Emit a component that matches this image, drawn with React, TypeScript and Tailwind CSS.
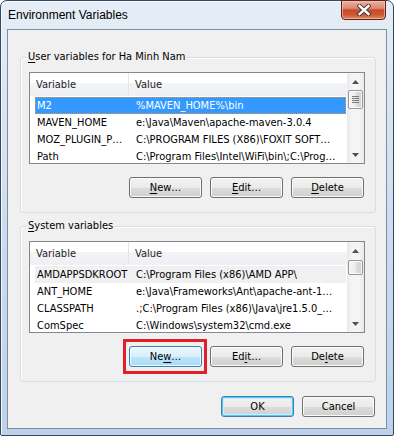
import React from "react";

type Row = { name: string; value: string; sel?: "focus" | "inactive" };

const userRows: Row[] = [
  { name: "M2", value: "%MAVEN_HOME%\\bin", sel: "focus" },
  { name: "MAVEN_HOME", value: "e:\\Java\\Maven\\apache-maven-3.0.4" },
  { name: "MOZ_PLUGIN_P…", value: "C:\\PROGRAM FILES (X86)\\FOXIT SOFT…" },
  { name: "Path", value: "C:\\Program Files\\Intel\\WiFi\\bin\\;C:\\Prog…" },
];

const sysRows: Row[] = [
  { name: "AMDAPPSDKROOT", value: "C:\\Program Files (x86)\\AMD APP\\", sel: "inactive" },
  { name: "ANT_HOME", value: "e:\\Java\\Frameworks\\Ant\\apache-ant-1…" },
  { name: "CLASSPATH", value: ".;C:\\Program Files (x86)\\Java\\jre1.5.0_…" },
  { name: "ComSpec", value: "C:\\Windows\\system32\\cmd.exe" },
];

function Btn({
  children,
  kind = "normal",
}: {
  children: React.ReactNode;
  kind?: "normal" | "hot" | "default";
}) {
  const base =
    "w-[73px] h-[21px] flex items-center justify-center rounded-[3px] border text-[11px] leading-none text-black";
  const cls =
    kind === "hot"
      ? "border-[#3c7fb1] bg-[linear-gradient(#eaf6fd_0%,#d9f0fc_50%,#bee6fd_50%,#a7d9f5_100%)] shadow-[inset_0_0_0_1px_#f4fbfe]"
      : kind === "default"
      ? "border-[#3c7fb1] bg-[linear-gradient(#f2f2f2_0%,#ebebeb_50%,#dddddd_50%,#cfcfcf_100%)] shadow-[inset_0_0_0_1px_#56c6f2,inset_0_0_0_2px_#c9eefc]"
      : "border-[#707070] bg-[linear-gradient(#f2f2f2_0%,#ebebeb_50%,#dddddd_50%,#cfcfcf_100%)] shadow-[inset_0_0_0_1px_#fbfbfb]";
  return <div className={`${base} ${cls}`}>{children}</div>;
}

function U({ children }: { children: React.ReactNode }) {
  return <span className="underline decoration-1 underline-offset-[2px]">{children}</span>;
}

function Arrow({ up }: { up?: boolean }) {
  return (
    <svg width="7" height="4" viewBox="0 0 7 4">
      {up ? (
        <polygon points="3.5,0 7,4 0,4" fill="#505050" />
      ) : (
        <polygon points="0,0 7,0 3.5,4" fill="#505050" />
      )}
    </svg>
  );
}

function VarList({
  rows,
  thumb,
  grip,
}: {
  rows: Row[];
  thumb: string;
  grip?: boolean;
}) {
  return (
    <div className="w-[336px] h-[92px] border border-[#828790] bg-white flex overflow-hidden">
      <div className="flex-1 flex flex-col min-w-0">
        <div className="h-[23px] flex shrink-0 bg-[linear-gradient(#ffffff_0%,#ffffff_45%,#f3f4f6_45%,#eef0f3_100%)] border-b border-[#eef0f3]">
          <div className="w-[99px] pl-[6px] flex items-center border-r border-[#e3e6ea] text-[#1e1e1e]">Variable</div>
          <div className="flex-1 pl-[6px] flex items-center text-[#1e1e1e]">Value</div>
        </div>
        <div className="h-[1px] shrink-0" />
        {rows.map((r) => (
          <div
            key={r.name}
            className={`h-[17px] ml-[5px] mr-[1px] flex items-center shrink-0 whitespace-nowrap ${
              r.sel === "focus"
                ? "bg-[#3399ff] text-white outline-1 outline-dotted outline-[#e39a3f] -outline-offset-1"
                : r.sel === "inactive"
                ? "bg-[#f0f0f0] text-black"
                : "text-black"
            }`}
          >
            <div className="w-[95px] pl-[2px] shrink-0 overflow-hidden">{r.name}</div>
            <div className="flex-1 pl-[6px] overflow-hidden">{r.value}</div>
          </div>
        ))}
      </div>
      <div className="w-[17px] shrink-0 flex flex-col bg-[linear-gradient(to_right,#e9e9e9,#f5f5f5_30%,#f5f5f5_70%,#e9e9e9)]">
        <div className="h-[17px] shrink-0 flex items-center justify-center">
          <Arrow up />
        </div>
        <div
          className={`mx-[1px] rounded-[2px] border border-[#979797] bg-[linear-gradient(to_right,#f5f5f5_0%,#ececec_50%,#dedede_50%,#d0d0d0_100%)] shadow-[inset_0_0_0_1px_#fafafa] flex flex-col items-center justify-center gap-[1px] ${thumb}`}
        >
          {grip && (
            <>
              <div className="w-[7px] h-[1px] bg-[#7a7a7a]" />
              <div className="w-[7px] h-[1px] bg-[#7a7a7a]" />
              <div className="w-[7px] h-[1px] bg-[#7a7a7a]" />
              <div className="w-[7px] h-[1px] bg-[#7a7a7a]" />
            </>
          )}
        </div>
        <div className="flex-1" />
        <div className="h-[17px] shrink-0 flex items-center justify-center">
          <Arrow />
        </div>
      </div>
    </div>
  );
}

function Group({
  label,
  children,
  className = "",
}: {
  label: React.ReactNode;
  children: React.ReactNode;
  className?: string;
}) {
  return (
    <div
      className={`relative w-[356px] h-[156px] ml-[12px] border border-[#d5dfe5] rounded-[3px] shadow-[inset_1px_1px_0_#ffffff] pt-[14px] pl-[8px] pr-[10px] ${className}`}
    >
      <div className="absolute -top-[8px] left-[6px] px-[1px] bg-[#f0f0f0] text-black leading-[14px]">{label}</div>
      {children}
    </div>
  );
}

export default function App() {
  return (
    <div className="w-[394px] h-[436px] bg-white font-['DejaVu_Sans_Condensed','Liberation_Sans',Arial,sans-serif] text-[11px] leading-[13px]">
      <div className="w-[394px] h-[436px] flex flex-col rounded-t-[7px] rounded-b-[2px] border border-[#34495f] bg-[linear-gradient(#e6edf6_0%,#dce6f2_20%,#c9daed_60%,#bdd2ea_100%)] shadow-[inset_1px_1px_0_#f4f8fc]">
        <div className="h-[28px] shrink-0 flex">
          <div className="pl-[7px] self-center text-[12px] text-black font-['Liberation_Sans',Arial,sans-serif]">Environment Variables</div>
          <div className="ml-auto mr-[7px] -mt-[1px] w-[45px] h-[20px] rounded-b-[4px] border border-[#5e2218] bg-[linear-gradient(#eab1a2_0%,#db8a73_40%,#c8492c_50%,#cd5533_75%,#e08a66_100%)] shadow-[inset_0_0_0_1px_rgba(255,210,190,0.55)] flex items-center justify-center">
            <svg width="14" height="12" viewBox="0 0 14 12">
              <path d="M2.5 2 L11.5 10 M11.5 2 L2.5 10" stroke="#3b2a28" strokeWidth="4.2" strokeLinecap="square" />
              <path d="M2.5 2 L11.5 10 M11.5 2 L2.5 10" stroke="#ffffff" strokeWidth="2.4" strokeLinecap="square" />
            </svg>
          </div>
        </div>
        <div className="mx-[6px] mb-[6px] flex-1 border border-[#7b8ea4] bg-[#f0f0f0] flex flex-col">
          <Group
            className="mt-[27px]"
            label={
              <>
                <U>U</U>ser variables for Ha Minh Nam
              </>
            }
          >
            <VarList rows={userRows} thumb="h-[19px]" grip />
            <div className="mt-[13px] mr-[1px] flex justify-end gap-[8px]">
              <Btn>
                <U>N</U>ew…
              </Btn>
              <Btn>
                <U>E</U>dit…
              </Btn>
              <Btn>
                <U>D</U>elete
              </Btn>
            </div>
          </Group>
          <Group
            className="mt-[13px]"
            label={
              <>
                <U>S</U>ystem variables
              </>
            }
          >
            <VarList rows={sysRows} thumb="mt-[1px] h-[15px]" />
            <div className="mt-[13px] mr-[1px] flex justify-end gap-[8px]">
              <div className="relative">
                <Btn kind="hot">
                  Ne<U>w</U>…
                </Btn>
                <div className="absolute -left-[6px] -top-[7px] -right-[5px] -bottom-[7px] border-[3px] border-[#e2202a] pointer-events-none" />
              </div>
              <Btn>
                Ed<U>i</U>t…
              </Btn>
              <Btn>
                De<U>l</U>ete
              </Btn>
            </div>
          </Group>
          <div className="mt-[14px] pr-[11px] flex justify-end gap-[8px]">
            <Btn kind="default">OK</Btn>
            <Btn>Cancel</Btn>
          </div>
        </div>
      </div>
    </div>
  );
}
